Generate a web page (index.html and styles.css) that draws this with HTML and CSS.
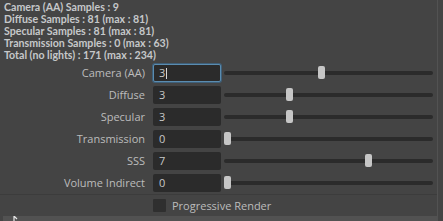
FILE: index.html
```html
<!DOCTYPE html>
<html>
<head>
<meta charset="utf-8">
<link rel="stylesheet" href="styles.css">
</head>
<body>
<div class="panel">
  <div class="info">
    <div>Camera (AA) Samples : 9</div>
    <div>Diffuse Samples : 81 (max : 81)</div>
    <div>Specular Samples : 81 (max : 81)</div>
    <div>Transmission Samples : 0 (max : 63)</div>
    <div>Total (no lights) : 171 (max : 234)</div>
  </div>
  <div class="rows">
    <div class="row">
      <span class="label">Camera (AA)</span>
      <span class="field focus">3<span class="caret"></span></span>
      <span class="slider"><span class="track"></span><span class="handle" style="left:94px"></span></span>
    </div>
    <div class="row">
      <span class="label">Diffuse</span>
      <span class="field">3</span>
      <span class="slider"><span class="track"></span><span class="handle" style="left:62px"></span></span>
    </div>
    <div class="row">
      <span class="label">Specular</span>
      <span class="field">3</span>
      <span class="slider"><span class="track"></span><span class="handle" style="left:62px"></span></span>
    </div>
    <div class="row">
      <span class="label">Transmission</span>
      <span class="field">0</span>
      <span class="slider"><span class="track"></span><span class="handle" style="left:0px"></span></span>
    </div>
    <div class="row">
      <span class="label">SSS</span>
      <span class="field">7</span>
      <span class="slider"><span class="track"></span><span class="handle" style="left:141px"></span></span>
    </div>
    <div class="row">
      <span class="label">Volume Indirect</span>
      <span class="field">0</span>
      <span class="slider"><span class="track"></span><span class="handle" style="left:0px"></span></span>
    </div>
  </div>
  <div class="check-row">
    <span class="box"></span>
    <span class="check-label">Progressive Render</span>
  </div>
  <div class="bottom">
    <svg class="cursor" width="6" height="5" viewBox="0 0 6 5"><path d="M1 0 L1 5 M1 0 L4 3" stroke="#e6e6e6" stroke-width="1.2" fill="none"/></svg>
  </div>
</div>
</body>
</html>
```
FILE: styles.css
```css
html, body {
  margin: 0;
  padding: 0;
  background: #444444;
  width: 443px;
  height: 221px;
  overflow: hidden;
}
body {
  font-family: "Open Sans", "DejaVu Sans", sans-serif;
}
.panel {
  width: 437px;
  height: 221px;
  border-right: 1px solid #525252;
  display: flex;
  flex-direction: column;
}
.info {
  padding: 1px 0 0 4px;
  height: 62px;
  font-family: Lato, "Open Sans", sans-serif;
  font-size: 10.6px;
  font-weight: 700;
  line-height: 12px;
  color: #c6c8ca;
  box-sizing: border-box;
}
.rows {
  display: flex;
  flex-direction: column;
  gap: 4px;
  margin-top: 2px;
}
.row {
  display: grid;
  grid-template-columns: 145px 68px 1fr;
  column-gap: 8px;
  height: 18px;
  align-items: center;
}
.label {
  text-align: right;
  font-size: 11px;
  color: #bcbcbc;
  line-height: 18px;
}
.field {
  height: 18px;
  background: #2b2b2b;
  border-radius: 2px;
  font-size: 11px;
  color: #c8c8c8;
  line-height: 18px;
  padding-left: 6px;
  box-sizing: border-box;
  display: flex;
  align-items: center;
}
.field.focus {
  border: 1px solid #5a8cb0;
  padding-left: 5px;
  box-shadow: 0 0 0 1px #3f5f78;
}
.caret {
  display: inline-block;
  width: 1px;
  height: 11px;
  background: #d8d8d8;
  margin-left: 1px;
}
.slider {
  position: relative;
  height: 18px;
  margin-left: -5px;
  margin-right: 4px;
}
.track {
  position: absolute;
  left: 0;
  right: 0;
  top: 7px;
  height: 4px;
  border-radius: 2px;
  background: #2b2b2b;
}
.handle {
  position: absolute;
  top: 2px;
  width: 7px;
  height: 13px;
  border-radius: 2px;
  background: #c6c6c6;
}
.check-row {
  margin-top: 2px;
  border-top: 1px solid #3c3c3c;
  height: 13px;
  padding-top: 4px;
  display: flex;
  align-items: center;
  gap: 6px;
  padding-left: 153px;
}
.box {
  width: 13px;
  height: 13px;
  background: #2f2f2f;
  border-radius: 1px;
}
.check-label {
  font-size: 11px;
  color: #bcbcbc;
  line-height: 13px;
}
.bottom {
  margin-top: auto;
  margin-left: 3px;
  height: 5px;
  background: #525252;
  position: relative;
  overflow: hidden;
}
.cursor {
  position: absolute;
  left: 10px;
  top: 0;
}
```
